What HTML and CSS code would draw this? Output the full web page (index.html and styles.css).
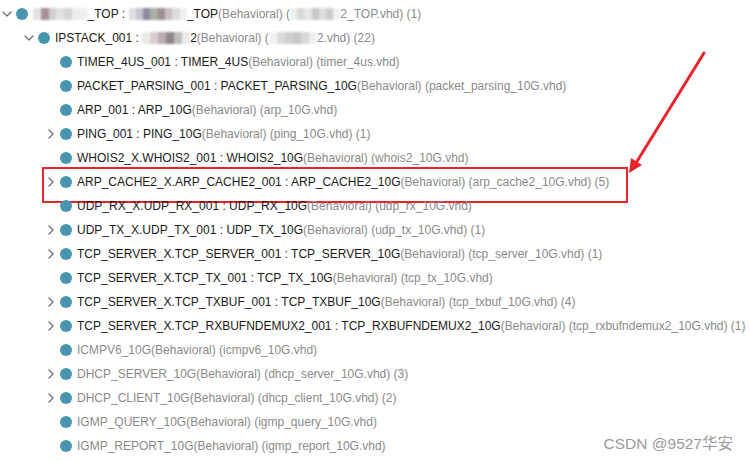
FILE: index.html
```html
<!DOCTYPE html>
<html>
<head>
<meta charset="utf-8">
<link rel="stylesheet" href="styles.css">
</head>
<body>
<div class="page">
  <ul class="tree">
    <li class="row l0"><span class="chev down"><svg viewBox="0 0 10 6" width="10" height="6"><path d="M1 1 L5 5 L9 1" /></svg></span><span class="dot"></span><span class="label"><span class="mosaic m1"><i></i><i></i><i></i><i></i><i></i><i></i><i></i></span>_TOP : <span class="mosaic m2"><i></i><i></i><i></i><i></i><i></i><i></i><i></i><i></i></span>_TOP<span class="meta">(Behavioral) (<span class="mosaic m3"><i></i><i></i><i></i><i></i><i></i><i></i><i></i></span>2_TOP.vhd) (1)</span></span></li>
    <li class="row l1"><span class="chev down"><svg viewBox="0 0 10 6" width="10" height="6"><path d="M1 1 L5 5 L9 1" /></svg></span><span class="dot"></span><span class="label">IPSTACK_001 : <span class="mosaic m4"><i></i><i></i><i></i><i></i><i></i><i></i></span>2<span class="meta">(Behavioral) (<span class="mosaic m5"><i></i><i></i><i></i><i></i><i></i><i></i></span>2.vhd) (22)</span></span></li>
    <li class="row l2"><span class="chev"></span><span class="dot"></span><span class="label">TIMER_4US_001 : TIMER_4US<span class="meta">(Behavioral) (timer_4us.vhd)</span></span></li>
    <li class="row l2"><span class="chev"></span><span class="dot"></span><span class="label">PACKET_PARSING_001 : PACKET_PARSING_10G<span class="meta">(Behavioral) (packet_parsing_10G.vhd)</span></span></li>
    <li class="row l2"><span class="chev"></span><span class="dot"></span><span class="label">ARP_001 : ARP_10G<span class="meta">(Behavioral) (arp_10G.vhd)</span></span></li>
    <li class="row l2"><span class="chev right"><svg viewBox="0 0 6 10" width="6" height="10"><path d="M1 1 L5 5 L1 9" /></svg></span><span class="dot"></span><span class="label">PING_001 : PING_10G<span class="meta">(Behavioral) (ping_10G.vhd) (1)</span></span></li>
    <li class="row l2"><span class="chev"></span><span class="dot"></span><span class="label">WHOIS2_X.WHOIS2_001 : WHOIS2_10G<span class="meta">(Behavioral) (whois2_10G.vhd)</span></span></li>
    <li class="row l2 marked"><span class="chev right"><svg viewBox="0 0 6 10" width="6" height="10"><path d="M1 1 L5 5 L1 9" /></svg></span><span class="dot"></span><span class="label">ARP_CACHE2_X.ARP_CACHE2_001 : ARP_CACHE2_10G<span class="meta">(Behavioral) (arp_cache2_10G.vhd) (5)</span></span></li>
    <li class="row l2"><span class="chev"></span><span class="dot"></span><span class="label">UDP_RX_X.UDP_RX_001 : UDP_RX_10G<span class="meta">(Behavioral) (udp_rx_10G.vhd)</span></span></li>
    <li class="row l2"><span class="chev right"><svg viewBox="0 0 6 10" width="6" height="10"><path d="M1 1 L5 5 L1 9" /></svg></span><span class="dot"></span><span class="label">UDP_TX_X.UDP_TX_001 : UDP_TX_10G<span class="meta">(Behavioral) (udp_tx_10G.vhd) (1)</span></span></li>
    <li class="row l2"><span class="chev right"><svg viewBox="0 0 6 10" width="6" height="10"><path d="M1 1 L5 5 L1 9" /></svg></span><span class="dot"></span><span class="label">TCP_SERVER_X.TCP_SERVER_001 : TCP_SERVER_10G<span class="meta">(Behavioral) (tcp_server_10G.vhd) (1)</span></span></li>
    <li class="row l2"><span class="chev"></span><span class="dot"></span><span class="label">TCP_SERVER_X.TCP_TX_001 : TCP_TX_10G<span class="meta">(Behavioral) (tcp_tx_10G.vhd)</span></span></li>
    <li class="row l2"><span class="chev right"><svg viewBox="0 0 6 10" width="6" height="10"><path d="M1 1 L5 5 L1 9" /></svg></span><span class="dot"></span><span class="label">TCP_SERVER_X.TCP_TXBUF_001 : TCP_TXBUF_10G<span class="meta">(Behavioral) (tcp_txbuf_10G.vhd) (4)</span></span></li>
    <li class="row l2"><span class="chev right"><svg viewBox="0 0 6 10" width="6" height="10"><path d="M1 1 L5 5 L1 9" /></svg></span><span class="dot"></span><span class="label">TCP_SERVER_X.TCP_RXBUFNDEMUX2_001 : TCP_RXBUFNDEMUX2_10G<span class="meta">(Behavioral) (tcp_rxbufndemux2_10G.vhd) (1)</span></span></li>
    <li class="row l2"><span class="chev"></span><span class="dot"></span><span class="label meta">ICMPV6_10G(Behavioral) (icmpv6_10G.vhd)</span></li>
    <li class="row l2"><span class="chev right"><svg viewBox="0 0 6 10" width="6" height="10"><path d="M1 1 L5 5 L1 9" /></svg></span><span class="dot"></span><span class="label meta">DHCP_SERVER_10G(Behavioral) (dhcp_server_10G.vhd) (3)</span></li>
    <li class="row l2"><span class="chev right"><svg viewBox="0 0 6 10" width="6" height="10"><path d="M1 1 L5 5 L1 9" /></svg></span><span class="dot"></span><span class="label meta">DHCP_CLIENT_10G(Behavioral) (dhcp_client_10G.vhd) (2)</span></li>
    <li class="row l2"><span class="chev"></span><span class="dot"></span><span class="label meta">IGMP_QUERY_10G(Behavioral) (igmp_query_10G.vhd)</span></li>
    <li class="row l2"><span class="chev"></span><span class="dot"></span><span class="label meta">IGMP_REPORT_10G(Behavioral) (igmp_report_10G.vhd)</span></li>
  </ul>
  <svg class="arrow" width="749" height="461" viewBox="0 0 749 461">
    <line x1="704" y1="53" x2="636" y2="163" stroke="#e8242c" stroke-width="3" stroke-linecap="round"/>
    <polygon points="629,173 631,158 642,165" fill="#e8242c"/>
  </svg>
  <div class="watermark">CSDN @9527华安</div>
</div>
</body>
</html>
```
FILE: styles.css
```css
* { box-sizing: border-box; }
html, body { margin: 0; padding: 0; background: #fff; }
body {
  font-family: "Liberation Sans", Arial, "Noto Sans CJK SC", sans-serif;
  font-size: 12px;
  color: #1a1a1a;
}
.page {
  position: relative;
  width: 749px;
  height: 461px;
  overflow: hidden;
  padding-top: 2px;
}
.tree {
  list-style: none;
  margin: 0;
  padding: 0;
}
.row {
  position: relative;
  display: flex;
  align-items: center;
  height: 24px;
  white-space: nowrap;
}
.l0 { padding-left: 0; }
.l1 { padding-left: 22px; }
.l2 { padding-left: 44px; }
.chev {
  width: 16px;
  height: 24px;
  display: flex;
  align-items: center;
  padding-left: 2px;
  flex: none;
}
.chev.right { padding-left: 4px; }
.chev svg path {
  fill: none;
  stroke: #6e6e6e;
  stroke-width: 1.3;
  stroke-linecap: round;
  stroke-linejoin: round;
}
.dot {
  width: 12px;
  min-width: 12px;
  height: 12px;
  border-radius: 50%;
  background: #4896ae;
  flex: none;
  margin-right: 5px;
}
.meta { color: #8a8a8a; }
.mosaic {
  display: inline-flex;
  vertical-align: -2px;
  height: 12px;
  filter: blur(1px);
}
.mosaic i {
  display: block;
  width: 8px;
  height: 12px;
  background: #d6d6d6;
}
.m1 i { width: 7.8px; }
.m2 i { width: 7.3px; }
.m3 i { width: 7.2px; }
.m1 i:nth-child(1) { background: #e4e4e4; }
.m1 i:nth-child(2) { background: #a89098; }
.m1 i:nth-child(3) { background: #cfcfd2; }
.m1 i:nth-child(4) { background: #e2e2e2; }
.m1 i:nth-child(5) { background: #d3d6d6; }
.m1 i:nth-child(6) { background: #ececec; }
.m1 i:nth-child(7) { background: #f0f0f0; }
.m2 i:nth-child(1) { background: #dfe0e4; }
.m2 i:nth-child(2) { background: #c6c6cc; }
.m2 i:nth-child(3) { background: #8c8aa0; }
.m2 i:nth-child(4) { background: #a8b0a0; }
.m2 i:nth-child(5) { background: #9a9090; }
.m2 i:nth-child(6) { background: #c8c0c0; }
.m2 i:nth-child(7) { background: #dcdcdc; }
.m2 i:nth-child(8) { background: #f0f0f0; }
.m3 i:nth-child(1) { background: #eef0f0; }
.m3 i:nth-child(2) { background: #d8d8d8; }
.m3 i:nth-child(3) { background: #e6e6e6; }
.m3 i:nth-child(4) { background: #c8c8c8; }
.m3 i:nth-child(5) { background: #dedede; }
.m3 i:nth-child(6) { background: #cccccc; }
.m3 i:nth-child(7) { background: #f2f2f2; }
.m4 i:nth-child(1) { background: #e8ece4; }
.m4 i:nth-child(2) { background: #d8d0d0; }
.m4 i:nth-child(3) { background: #b8b0b0; }
.m4 i:nth-child(4) { background: #908888; }
.m4 i:nth-child(5) { background: #c0bcbc; }
.m4 i:nth-child(6) { background: #ececec; }
.m5 i:nth-child(1) { background: #f2f2f2; }
.m5 i:nth-child(2) { background: #dcdcdc; }
.m5 i:nth-child(3) { background: #d0d0d0; }
.m5 i:nth-child(4) { background: #c8c8c8; }
.m5 i:nth-child(5) { background: #d8d8d8; }
.m5 i:nth-child(6) { background: #eeeeee; }
.marked::after {
  content: "";
  position: absolute;
  left: 42px;
  top: -3px;
  width: 582px;
  height: 32px;
  border: 2px solid #e8242c;
}
.arrow {
  position: absolute;
  left: 0;
  top: 0;
  pointer-events: none;
}
.watermark {
  position: absolute;
  right: 16px;
  bottom: 8px;
  font-size: 15.5px;
  color: #9a9a9a;
}
```
